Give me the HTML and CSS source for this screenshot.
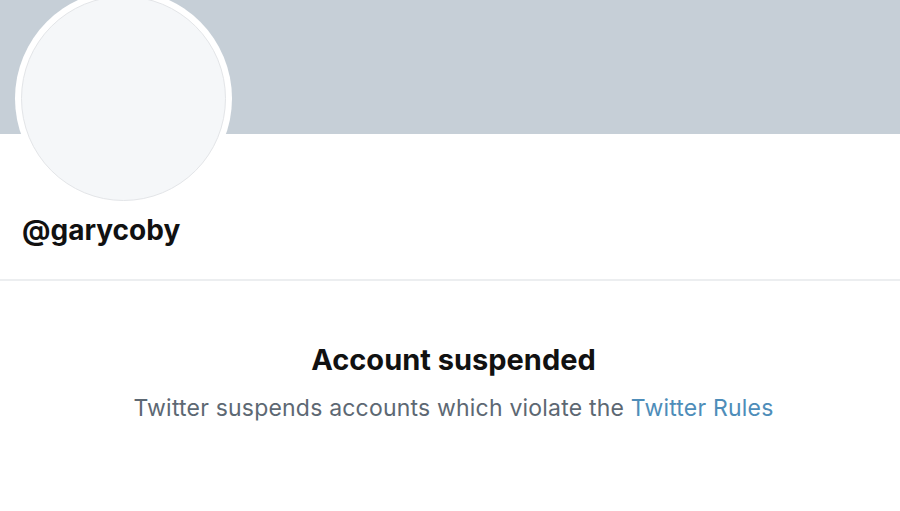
FILE: index.html
```html
<!DOCTYPE html>
<html>

<head>
  <title>@garycoby</title>
  <link rel="stylesheet" href="styles.css">
</head>

<body>
  <div class="banner"></div>
  <div class="profile">
    <div class="avatar"><div class="avatar-inner"></div></div>
    <h2 class="handle">@garycoby</h2>
  </div>
  <div class="notice">
    <h1>Account suspended</h1>
    <p>Twitter suspends accounts which violate the <a href="#">Twitter Rules</a></p>
  </div>
</body>

</html>
```
FILE: styles.css
```css
/* Suspended profile page */
body {
  margin: 0;
  font-family: Inter, "Liberation Sans", sans-serif;
  background-color: #ffffff;
  color: #14171a;
  overflow: hidden;
}

.banner {
  height: 134px;
  background-color: #c6cfd7;
}

.profile {
  padding: 0 22px 33px;
  border-bottom: 2px solid #eceef0;
}

.avatar {
  width: 217px;
  height: 217px;
  margin-top: -144px;
  margin-left: -7px;
  border-radius: 50%;
  background-color: #ffffff;
  padding: 6px;
  box-sizing: border-box;
}

.avatar-inner {
  width: 100%;
  height: 100%;
  border-radius: 50%;
  background-color: #f5f7f9;
  border: 1px solid #e3e5e8;
  box-sizing: border-box;
}

.handle {
  margin: 7px 0 0;
  font-size: 28px;
  line-height: 32px;
  font-weight: 700;
  color: #111111;
}

.notice {
  text-align: center;
  padding-top: 62px;
  padding-left: 7px;
}

.notice h1 {
  margin: 0;
  font-size: 29px;
  line-height: 34px;
  font-weight: 700;
  color: #111111;
}

.notice p {
  margin: 16px 0 0;
  font-size: 23px;
  line-height: 30px;
  letter-spacing: 0.2px;
  color: #5d6873;
}

.notice a {
  color: #4e8db9;
  text-decoration: none;
}
```
